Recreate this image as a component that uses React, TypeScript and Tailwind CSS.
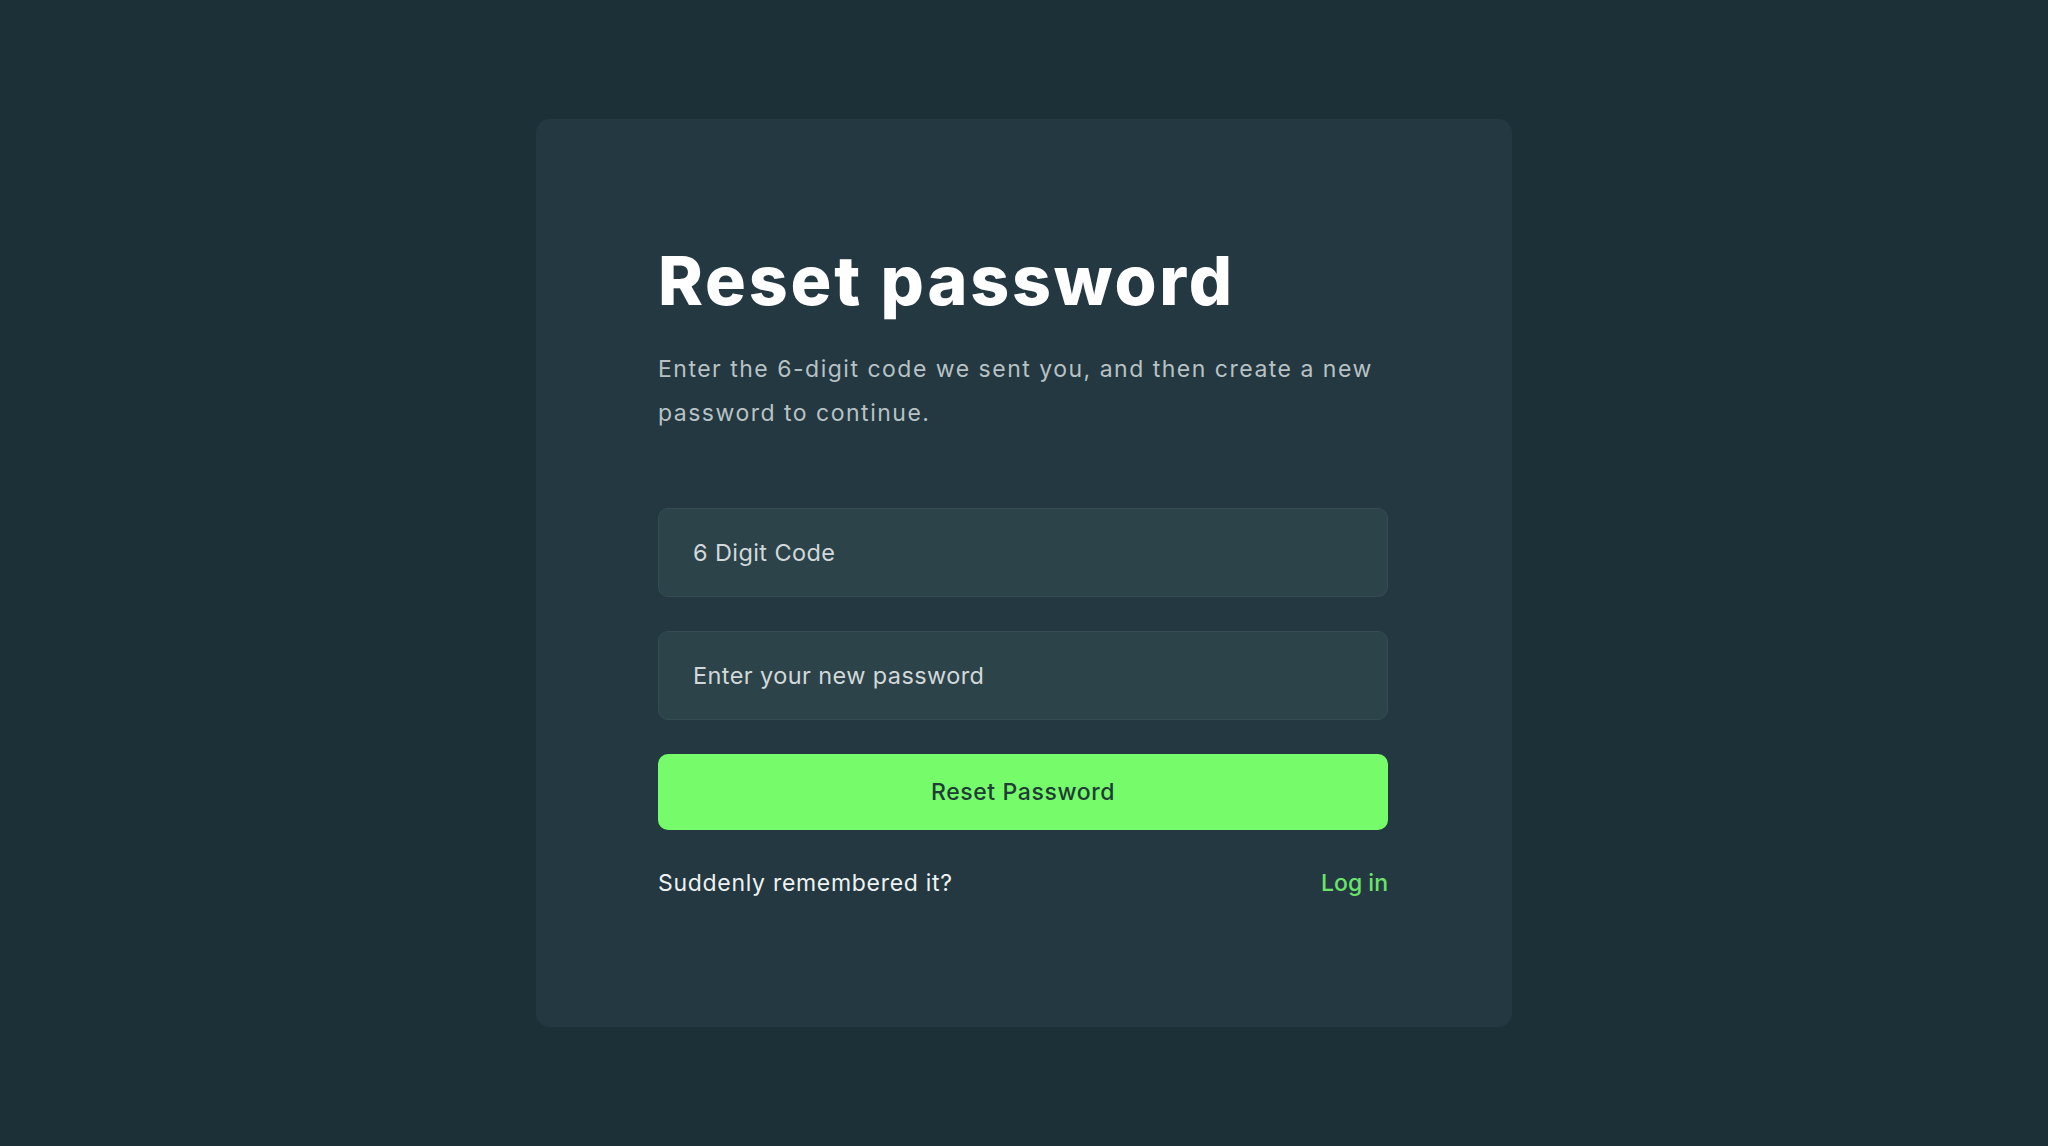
import React from "react";

export default function App() {
  return (
    <div
      className="w-full min-h-[1146px] bg-[#1c3137] flex items-center justify-center"
      style={{ fontFamily: "Inter, 'Noto Sans', sans-serif" }}
    >
      <div className="w-[976px] h-[908px] rounded-[14px] bg-[#233840] pl-[122px] pr-[124px] pt-[127px]">
        <h1 className="text-[68px] leading-none font-extrabold text-white tracking-[2.8px]">
          Reset password
        </h1>
        <p className="mt-[33px] text-[23px] leading-[44px] tracking-[1.5px] text-[#b8c2c4]">
          Enter the 6-digit code we sent you, and then create a new password to continue.
        </p>
        <div className="mt-[73px] flex flex-col gap-[34px]">
          <input
            className="h-[89px] w-full rounded-[10px] border border-[#354c53] bg-[#2c434a] px-[34px] text-[23.5px] tracking-[0.4px] text-white placeholder:text-[#d2d8d9] outline-none"
            placeholder="6 Digit Code"
          />
          <input
            type="password"
            className="h-[89px] w-full rounded-[10px] border border-[#354c53] bg-[#2c434a] px-[34px] text-[23.5px] tracking-[0.4px] text-white placeholder:text-[#d2d8d9] outline-none"
            placeholder="Enter your new password"
          />
        </div>
        <button className="mt-[34px] h-[76px] w-full rounded-[10px] bg-[#76fb6b] text-[23px] tracking-[0.6px] font-medium text-[#1f3d36]">
          Reset Password
        </button>
        <div className="mt-[37px] flex items-center justify-between text-[23px] leading-[32px]">
          <span className="text-[#eef2f2] tracking-[0.7px]">Suddenly remembered it?</span>
          <a className="text-[#6be36a] font-medium" href="#">
            Log in
          </a>
        </div>
      </div>
    </div>
  );
}
